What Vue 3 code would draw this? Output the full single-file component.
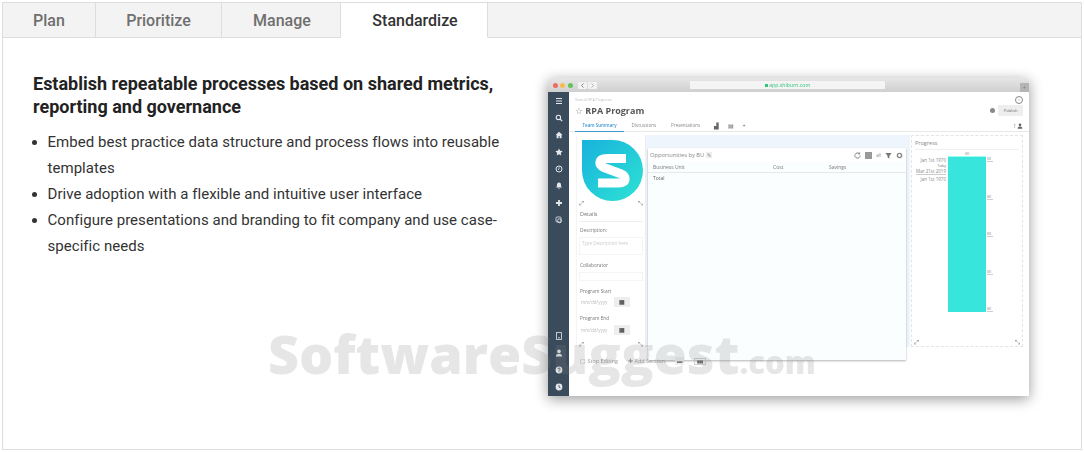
<script setup>
const tabs = [
  { label: 'Plan', width: 93 },
  { label: 'Prioritize', width: 126 },
  { label: 'Manage', width: 119 },
  { label: 'Standardize', width: 147, active: true },
];
const bullets = [
  'Embed best practice data structure and process flows into reusable templates',
  'Drive adoption with a flexible and intuitive user interface',
  'Configure presentations and branding to fit company and use case-specific needs',
];
const dateTicks = ['$0', '$0', '$0', '$0', '$0'];
</script>

<template>
  <div class="frame">
    <div class="tabs">
      <div
        v-for="tab in tabs"
        :key="tab.label"
        class="tab"
        :class="{ active: tab.active }"
        :style="{ width: tab.width + 'px' }"
      >{{ tab.label }}</div>
      <div class="tab-fill"></div>
    </div>

    <div class="body">
      <div class="copy">
        <h2>Establish repeatable processes based on shared metrics, reporting and governance</h2>
        <ul>
          <li v-for="item in bullets" :key="item">{{ item }}</li>
        </ul>
      </div>

      <div class="window">
        <div class="titlebar">
          <span class="dot red"></span><span class="dot amber"></span><span class="dot green"></span>
          <span class="nav">
            <svg width="9" height="7" viewBox="0 0 9 7"><path d="M5.500 1.500 3.500 3.500l2 2" fill="none" stroke="#777" stroke-width=".9"/></svg>
            <svg width="9" height="7" viewBox="0 0 9 7"><path d="m3.500 1.500 2 2-2 2" fill="none" stroke="#aaa" stroke-width=".9"/></svg>
          </span>
          <div class="url"><i></i>app.shiburn.com</div>
          <span class="plus-btn">+</span>
        </div>
        <div class="app">
          <div class="side">
            <div class="side-group">
              <svg width="8" height="8" viewBox="0 0 8 8"><path d="M1 1.500h6M1 4h6M1 6.500h6" stroke="#e4e8ec" stroke-width="1.100"/></svg>
              <svg width="8" height="8" viewBox="0 0 8 8"><circle cx="3.400" cy="3.400" r="2.200" fill="none" stroke="#e4e8ec" stroke-width="1.100"/><path d="m5 5 2.200 2.200" stroke="#e4e8ec" stroke-width="1.200"/></svg>
              <svg width="8" height="8" viewBox="0 0 8 8"><path d="M4 .8 .6 4h1v3.200h2V5h1v2.200h2V4h1z" fill="#e4e8ec"/></svg>
              <svg width="8" height="8" viewBox="0 0 8 8"><path d="m4 .4 1.100 2.400 2.600.3-1.900 1.800.5 2.600L4 6.200 1.700 7.500l.5-2.600L.3 3.100l2.600-.3z" fill="#e4e8ec"/></svg>
              <svg width="8" height="8" viewBox="0 0 8 8"><circle cx="4" cy="4" r="3" fill="none" stroke="#e4e8ec" stroke-width="1"/><path d="M4 2.200V4L3 5" fill="none" stroke="#e4e8ec" stroke-width=".8"/></svg>
              <svg width="8" height="8" viewBox="0 0 8 8"><path d="M4 .6C2.500 .6 2 1.800 2 3c0 1.500-.6 2-1.100 2.600h6.200C6.600 5 6 4.500 6 3 6 1.800 5.500 .6 4 .6zM3.200 6.300h1.600L4 7.400z" fill="#e4e8ec"/></svg>
              <svg width="8" height="8" viewBox="0 0 8 8"><path d="M3.100 1h1.800v2.100H7v1.800H4.900V7H3.100V4.900H1V3.100h2.100z" fill="#e4e8ec"/></svg>
              <svg width="8" height="8" viewBox="0 0 8 8"><rect x="1" y="1" width="5" height="5" rx="1" fill="none" stroke="#e4e8ec" stroke-width=".8"/><circle cx="4.500" cy="4.800" r="2" fill="none" stroke="#e4e8ec" stroke-width=".8"/></svg>
            </div>
            <div class="side-group">
              <svg width="8" height="8" viewBox="0 0 8 8"><rect x="1.500" y=".6" width="5" height="6.800" fill="none" stroke="#e4e8ec" stroke-width=".8"/><path d="M3 5.800h2" stroke="#e4e8ec" stroke-width=".8"/></svg>
              <svg width="8" height="8" viewBox="0 0 8 8"><circle cx="4" cy="2.400" r="1.800" fill="#e4e8ec"/><path d="M.8 7.500C1 5.500 2.500 4.800 4 4.800s3 .7 3.200 2.700z" fill="#e4e8ec"/></svg>
              <svg width="8" height="8" viewBox="0 0 8 8"><circle cx="4" cy="4" r="3.400" fill="#e4e8ec"/><path d="M2.800 3c.1-1.300 2.400-1.300 2.400 0 0 .9-1.200 .8-1.200 1.700M4 5.400v.8" fill="none" stroke="#3a4b5c" stroke-width=".8"/></svg>
              <svg width="8" height="8" viewBox="0 0 8 8"><circle cx="4" cy="4" r="3.400" fill="#e4e8ec"/><path d="M4 2v2.200l1.500 .7" fill="none" stroke="#3a4b5c" stroke-width=".8"/></svg>
            </div>
          </div>

          <div class="main">
            <div class="head">
              <div class="crumb">View all RPA Programs</div>
              <div class="title-row">
                <div class="title"><span class="star">☆</span> RPA Program</div>
                <div class="publish-wrap">
                  <span class="back-circle">‹</span>
                  <div class="publish-row"><span class="info"></span><span class="publish">Publish</span></div>
                </div>
              </div>
              <div class="app-tabs">
                <span class="app-tab on">Team Summary</span>
                <span class="app-tab">Discussions</span>
                <span class="app-tab">Presentations</span>
                <span class="app-ico">▟</span>
                <span class="app-ico">▤</span>
                <span class="app-ico">+</span>
                <span class="count">1 <svg width="6" height="6" viewBox="0 0 8 8"><circle cx="4" cy="2.400" r="1.800" fill="#666"/><path d="M.8 7.500C1 5.500 2.500 4.800 4 4.800s3 .7 3.200 2.700z" fill="#666"/></svg></span>
              </div>
            </div>

            <div class="panels">
              <div class="left">
                <div class="logo-box">
                  <svg width="61" height="61" viewBox="0 0 61 61">
                    <defs>
                      <linearGradient id="logoGrad" x1="0" y1="0" x2="1" y2="1">
                        <stop offset="0" stop-color="#18b2dc"/>
                        <stop offset="1" stop-color="#2ee3d4"/>
                      </linearGradient>
                    </defs>
                    <path d="M0 0h30.500a30.500 30.500 0 1 1-30.500 30.500z" fill="url(#logoGrad)"/>
                    <path d="M44 18.500H25C16 18.500 16 25 22 27.500L38 33.500C45 36 45 43 37 43H16" fill="none" stroke="#fff" stroke-width="9"/>
                  </svg>
                </div>
                <div class="resize"><span>⤢</span><span>⤡</span></div>
                <div class="details">Details</div>
                <div class="lbl first">Description:</div>
                <div class="textbox">Type Description here</div>
                <div class="lbl">Collaborator</div>
                <div class="inputbox"></div>
                <div class="lbl start">Program Start</div>
                <div class="date"><span>mm/dd/yyyy</span><b>▦</b></div>
                <div class="lbl tight">Program End</div>
                <div class="date"><span>mm/dd/yyyy</span><b>▦</b></div>
                <div class="resize low"><span>⤢</span><span>⤡</span></div>
              </div>

              <div class="mid">
                <div class="card">
                  <div class="card-head">
                    <span>Opportunities by BU</span>
                    <span class="edit">✎</span>
                    <span class="tools">
                      <svg width="7" height="7" viewBox="0 0 8 8"><path d="M7 4a3 3 0 1 1-1-2.200M6.500 .5v1.800H4.800" fill="none" stroke="#777" stroke-width="1"/></svg>
                      <i class="tool-sq"></i>
                      <em>all</em>
                      <svg width="7" height="7" viewBox="0 0 8 8"><path d="M.5 1h7L5 4.500V7.500L3 6.500v-2z" fill="#777"/></svg>
                      <svg width="7" height="7" viewBox="0 0 8 8"><circle cx="4" cy="4" r="2.400" fill="none" stroke="#888" stroke-width="1.600"/></svg>
                    </span>
                  </div>
                  <div class="grid-row hdr"><span>Business Unit</span><span>Cost</span><span>Savings</span></div>
                  <div class="grid-row"><span>Total</span></div>
                </div>
              </div>

              <div class="right">
                <div class="progress-title">Progress</div>
                <div class="chart">
                  <div class="dates">
                    <span>Jan 1st 1970</span>
                    <small>Today</small>
                    <span class="ruled">Mar 21st 2019</span>
                    <span>Jan 1st 1970</span>
                  </div>
                  <div class="bar-col">
                    <span class="bar-top">$0</span>
                    <div class="bar"></div>
                  </div>
                  <div class="ticks">
                    <span v-for="(t, i) in dateTicks" :key="i">{{ t }}</span>
                  </div>
                </div>
                <div class="resize low2"><span>⤢</span><span>⤡</span></div>
              </div>
            </div>

            <div class="footer">
              <span>▢ Stop Editing</span>
              <span>✚ Add Section</span>
              <span class="mini">▬</span>
              <span class="mini dark">▮▮▮</span>
            </div>
          </div>
        </div>
      </div>
    </div>

    <div class="mark">SoftwareSuggest<span>.com</span></div>
  </div>
</template>

<style>
html, body { margin: 0; background: #fff; }
</style>

<style scoped>
.frame {
  position: relative;
  box-sizing: border-box;
  width: 1080px;
  height: 448px;
  margin: 2px 0 0 2px;
  border: 1px solid #ddd;
  font-family: Roboto, "Liberation Sans", sans-serif;
  overflow: hidden;
  background: #fff;
}
.tabs {
  display: flex;
  height: 35px;
  background: #f3f3f3;
}
.tab {
  box-sizing: border-box;
  border-right: 1px solid #ddd;
  border-bottom: 1px solid #ddd;
  text-align: center;
  font-size: 16px;
  font-weight: 500;
  line-height: 36px;
  color: #6f6f6f;
}
.tab:nth-child(n+3) {
  padding-left: 2px;
}
.tab.active {
  background: #fff;
  color: #333;
  border-bottom-color: #fff;
}
.tab-fill {
  flex: 1;
  border-bottom: 1px solid #ddd;
}
.body {
  display: flex;
  padding: 35px 0 0 30px;
}
.copy {
  width: 515px;
}
h2 {
  margin: -1px 0 11px;
  width: 475px;
  font-size: 18px;
  font-weight: 700;
  line-height: 23px;
  color: #222;
}
ul {
  margin: 0;
  padding: 0 0 0 14.500px;
  width: 456px;
  font-size: 15px;
  letter-spacing: 0.04px;
  line-height: 26px;
  color: #333;
}
.window {
  width: 481px;
  height: 318px;
  margin-top: 5px;
  background: #fff;
  border-radius: 3px 3px 0 0;
  box-shadow: 0 3px 14px rgba(0, 0, 0, 0.4);
  overflow: hidden;
  filter: blur(0.6px);
  font-family: "Open Sans", "Liberation Sans", sans-serif;
  color: #777;
  font-size: 5px;
}
.titlebar {
  display: flex;
  align-items: center;
  height: 14px;
  padding-left: 5px;
  background: linear-gradient(#e6e6e6, #cfcfcf);
}
.dot {
  width: 5px;
  height: 5px;
  border-radius: 50%;
  margin-right: 2.500px;
}
.red { background: #ee6a5f; }
.amber { background: #f5bd4f; }
.green { background: #61c454; }
.nav {
  display: flex;
  gap: 1px;
  margin-left: 3px;
}
.nav svg {
  background: #f2f2f2;
  border-radius: 1px;
}
.url {
  width: 195px;
  margin-left: 93px;
  height: 8px;
  background: #f4f4f4;
  color: #32c47c;
  text-align: center;
  font-size: 5.200px;
  line-height: 8px;
}
.url i {
  display: inline-block;
  width: 3px;
  height: 3px;
  margin-right: 1px;
  background: #32c47c;
}
.plus-btn {
  width: 9px;
  height: 9px;
  margin: 5px 0 0 135px;
  background: #b5b5b5;
  color: #888;
  text-align: center;
  font-size: 7px;
  line-height: 9px;
}
.app {
  display: flex;
  height: 304px;
}
.side {
  width: 21px;
  flex: none;
  background: #3a4b5c;
  display: flex;
  flex-direction: column;
  justify-content: space-between;
  align-items: center;
  padding: 5px 0 5px;
  box-sizing: border-box;
}
.side-group {
  display: flex;
  flex-direction: column;
  gap: 9px;
}
.side-group svg { display: block; }
.main {
  flex: 1;
  min-width: 0;
}
.head {
  padding: 5px 6px 0 6px;
  height: 34px;
  border-bottom: 1px solid #e8e8e8;
}
.crumb {
  font-size: 3.500px;
  line-height: 5px;
  color: #bbb;
}
.title-row {
  display: flex;
  justify-content: space-between;
  height: 13px;
  margin-top: 2px;
}
.title {
  font-size: 9px;
  font-weight: 700;
  line-height: 13px;
  color: #555;
}
.star {
  font-weight: 400;
  color: #888;
}
.publish-wrap {
  position: relative;
  display: flex;
  align-items: center;
}
.publish-row {
  display: flex;
  align-items: center;
  gap: 3px;
}
.info {
  width: 5px;
  height: 5px;
  border-radius: 50%;
  background: #888;
}
.publish {
  background: #eee;
  padding: 3px 5.500px;
  border-radius: 1px;
  font-size: 4px;
  line-height: 5px;
  color: #666;
}
.back-circle {
  position: absolute;
  right: 0;
  top: -8px;
  width: 6px;
  height: 6px;
  border: 0.6px solid #888;
  border-radius: 50%;
  line-height: 5px;
  text-align: center;
}
.app-tabs {
  display: flex;
  align-items: center;
  margin-top: 3px;
  height: 11px;
  font-size: 4.500px;
  color: #888;
}
.app-tab {
  padding: 0 7.500px;
  height: 11px;
  line-height: 11px;
}
.app-tab.on {
  color: #3b96d2;
  font-weight: 600;
  border-bottom: 1px solid #3b96d2;
}
.app-ico {
  margin-left: 9px;
  font-size: 5.500px;
  color: #666;
}
.app-tab + .app-ico {
  margin-left: 6px;
}
.count {
  margin-left: auto;
  display: flex;
  align-items: center;
  gap: 1px;
  color: #777;
}
.panels {
  display: flex;
  padding-left: 7px;
  height: 212px;
  margin-top: 3px;
}
.left {
  width: 70px;
  flex: none;
  height: 100%;
  display: flex;
  flex-direction: column;
  padding: 0 2px;
  box-sizing: border-box;
  border-left: 1px solid #f4f4f4;
  border-right: 1px solid #eee;
}
.logo-box {
  height: 65px;
  padding: 5px 0 0 3px;
  box-sizing: border-box;
}
.logo-box svg { display: block; }
.resize {
  display: flex;
  justify-content: space-between;
  font-size: 6px;
  line-height: 6px;
  color: #555;
}
.details {
  margin-top: 3px;
  padding: 2px 0 3px 1px;
  border-bottom: 1px solid #eee;
  font-size: 5.500px;
  line-height: 7px;
  color: #777;
}
.lbl {
  margin: 7px 0 4px 1px;
  font-size: 4.800px;
  line-height: 6px;
  color: #777;
}
.lbl.first { margin-top: 5px; }
.lbl.start { margin-bottom: 3px; }
.lbl.tight { margin-top: 8px; }
.textbox {
  box-sizing: border-box;
  height: 19px;
  padding: 2px;
  font-size: 4.500px;
  line-height: 6px;
  color: #ccc;
  border: 0.5px solid #f4f4f4;
}
.inputbox {
  box-sizing: border-box;
  height: 10px;
  border: 0.5px solid #f4f4f4;
}
.date {
  display: flex;
  align-items: center;
  height: 10px;
  width: 51px;
  font-size: 4.500px;
  color: #bbb;
}
.date span {
  flex: 1;
  padding-left: 2px;
}
.date b {
  width: 16px;
  height: 10px;
  background: #eee;
  color: #555;
  font-size: 6px;
  line-height: 10px;
  text-align: center;
}
.resize.low { margin-top: 6px; }
.mid {
  width: 264px;
  flex: none;
  height: 100%;
  padding: 13px 4px 0 2px;
  box-sizing: border-box;
  background: #eef5fc;
}
.card {
  position: relative;
  height: 212px;
  background: #fbfeff;
  box-shadow: 0 1px 2px rgba(0, 0, 0, 0.3);
}
.card-head {
  display: flex;
  align-items: center;
  gap: 2px;
  height: 14px;
  padding: 0 3px 0 2px;
  background: #fff;
  font-size: 5.700px;
  color: #888;
}
.edit {
  background: #eee;
  padding: 0 1px;
  font-size: 5px;
}
.tools {
  margin-left: auto;
  display: flex;
  align-items: center;
  gap: 4px;
}
.tools em {
  font-style: normal;
  font-size: 4.500px;
}
.tool-sq {
  width: 7px;
  height: 7px;
  background: #999;
}
.grid-row {
  display: grid;
  grid-template-columns: 120px 56px 1fr;
  padding: 0 5px;
  font-size: 5px;
  line-height: 10px;
  height: 10px;
  color: #666;
}
.grid-row.hdr {
  border-bottom: 1px solid #e8e8e8;
  color: #777;
}
.right {
  position: relative;
  width: 112px;
  flex: none;
  margin-left: 1px;
  height: 100%;
  border: 0.6px dashed #e4e4e4;
  box-sizing: border-box;
  padding: 3px;
  background: #fff;
}
.progress-title {
  font-size: 5.500px;
  line-height: 8px;
  padding-bottom: 2px;
  border-bottom: 1px solid #f0f0f0;
  color: #888;
}
.chart {
  display: flex;
  margin-top: 1px;
}
.dates {
  width: 31px;
  flex: none;
  display: flex;
  flex-direction: column;
  align-items: flex-end;
  margin-top: 6px;
  font-size: 4.500px;
  line-height: 6.500px;
  color: #888;
  white-space: nowrap;
}
.dates small {
  font-size: 3px;
  line-height: 4px;
  color: #666;
}
.dates .ruled {
  border-bottom: 0.5px solid #ccc;
  margin-bottom: 1px;
}
.bar-col {
  width: 38px;
  margin-left: 2px;
  text-align: center;
  font-size: 3.500px;
  line-height: 5px;
}
.bar {
  height: 155px;
  background: #38e5dd;
  border-top: 0.5px solid #9fe;
}
.ticks {
  height: 160px;
  margin-top: 5px;
  display: flex;
  flex-direction: column;
  gap: 31.500px;
  font-size: 3.500px;
  line-height: 5px;
  color: #777;
  padding-left: 1px;
}
.ticks span {
  border-bottom: 0.5px solid #ccc;
  width: 6px;
}
.resize.low2 {
  position: absolute;
  left: 2px;
  right: 2px;
  bottom: 1px;
}
.footer {
  position: relative;
  z-index: 2;
  display: flex;
  align-items: center;
  gap: 10px;
  height: 10px;
  margin-top: 9px;
  padding-left: 11px;
  font-size: 5.500px;
  color: #999;
  white-space: nowrap;
}
.mini {
  padding: 0 2px;
  background: #eee;
  color: #777;
}
.mini.dark {
  color: #444;
  font-size: 4px;
  background: none;
  border: 0.5px solid #ccc;
}
.mark {
  position: absolute;
  left: 265px;
  top: 315px;
  font-family: "Open Sans", "Liberation Sans", sans-serif;
  font-size: 53.800px;
  font-weight: 800;
  line-height: 70px;
  color: rgba(130, 130, 130, 0.2);
  filter: blur(0.6px);
  white-space: nowrap;
}
.mark span {
  font-size: 31px;
}
</style>
